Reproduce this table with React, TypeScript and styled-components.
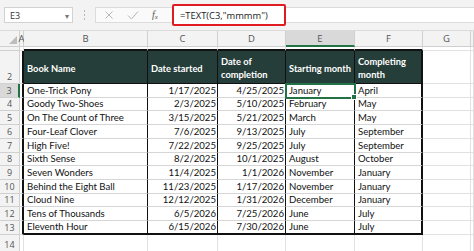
import React from 'react'
import styled, { createGlobalStyle, css } from 'styled-components'

const GlobalStyle = createGlobalStyle`
  html, body {
    margin: 0;
    padding: 0;
    background: #ffffff;
  }
  body {
    font-family: Lato, 'Noto Sans', sans-serif;
    overflow: hidden;
  }
`

const colors = {
  chrome: '#f3f3f3',
  grid: '#e1e1e1',
  headerLine: '#d0d0d0',
  headerText: '#555555',
  tableHead: '#263e3a',
  line: '#111111',
  rowLine: '#d6d6d6',
  excel: '#217346',
  red: '#e11b22',
}

const books = [
  ['One-Trick Pony', '1/17/2025', '4/25/2025', 'January', 'April'],
  ['Goody Two-Shoes', '2/3/2025', '5/10/2025', 'February', 'May'],
  ['On The Count of Three', '3/15/2025', '5/21/2025', 'March', 'May'],
  ['Four-Leaf Clover', '7/6/2025', '9/13/2025', 'July', 'September'],
  ['High Five!', '7/22/2025', '9/25/2025', 'July', 'September'],
  ['Sixth Sense', '8/2/2025', '10/1/2025', 'August', 'October'],
  ['Seven Wonders', '11/4/2025', '1/1/2026', 'November', 'January'],
  ['Behind the Eight Ball', '11/23/2025', '1/17/2026', 'November', 'January'],
  ['Cloud Nine', '12/12/2025', '1/31/2026', 'December', 'January'],
  ['Tens of Thousands', '6/5/2026', '7/25/2026', 'June', 'July'],
  ['Eleventh Hour', '6/15/2026', '7/30/2026', 'June', 'July'],
]

const columns = ['A', 'B', 'C', 'D', 'E', 'F', 'G', '']

const App = () => {
  return (
    <>
      <GlobalStyle />
      <Div_Window>
        <Div_FormulaBar>
          <Div_NameBox>
            E3
            <Span_Caret>▾</Span_Caret>
          </Div_NameBox>
          <Div_Grip>
            <i />
            <i />
            <i />
          </Div_Grip>
          <Div_FxGroup>
            <svg width='10' height='10' viewBox='0 0 10 10'>
              <path d='M1.5 1.5 L8.5 8.5 M8.5 1.5 L1.5 8.5' stroke='#b5b5b5' strokeWidth='1' fill='none' />
            </svg>
            <svg width='12' height='10' viewBox='0 0 12 10'>
              <path d='M1 5.5 L4.5 9 L11 1.5' stroke='#b5b5b5' strokeWidth='1' fill='none' />
            </svg>
            <Span_Fx>
              f<sub>x</sub>
            </Span_Fx>
          </Div_FxGroup>
          <Div_FormulaInput>=TEXT(C3,"mmmm")</Div_FormulaInput>
          <Div_FormulaRest />
        </Div_FormulaBar>

        <Div_Row $height='16px'>
          <Div_Corner>
            <svg width='8' height='8' viewBox='0 0 8 8'>
              <polygon points='8,0 8,8 0,8' fill='#bdbdbd' />
            </svg>
          </Div_Corner>
          {columns.map((c) => (
            <Div_ColHead key={c || 'rest'} $active={c === 'E'}>
              {c}
            </Div_ColHead>
          ))}
        </Div_Row>

        <Div_Row $height='4px'>
          <Div_RowHead>1</Div_RowHead>
          <Div_GridCell />
          {[0, 1, 2, 3, 4].map((i) => (
            <Div_GridCell key={i} $bottom={`2px solid ${colors.line}`} />
          ))}
          <Div_GridCell />
          <Div_GridCell />
        </Div_Row>

        <Div_Row $height='33px'>
          <Div_RowHead>2</Div_RowHead>
          <Div_GridCell $right={`2px solid ${colors.line}`} />
          <Div_HeadCell>Book Name</Div_HeadCell>
          <Div_HeadCell>Date started</Div_HeadCell>
          <Div_HeadCell>
            Date of
            <br />
            completion
          </Div_HeadCell>
          <Div_HeadCell>Starting month</Div_HeadCell>
          <Div_HeadCell $last>
            Completing
            <br />
            month
          </Div_HeadCell>
          <Div_GridCell />
          <Div_GridCell />
        </Div_Row>

        {books.map((b, i) => {
          const last = i === books.length - 1
          return (
            <Div_Row key={b[0]} $height='13.73px'>
              <Div_RowHead $active={i === 0}>{i + 3}</Div_RowHead>
              <Div_GridCell $right={`2px solid ${colors.line}`} />
              <Div_DataCell $last={last}>{b[0]}</Div_DataCell>
              <Div_DataCell $last={last} $num>
                {b[1]}
              </Div_DataCell>
              <Div_DataCell $last={last} $num>
                {b[2]}
              </Div_DataCell>
              <Div_DataCell $last={last} $selected={i === 0}>
                {b[3]}
              </Div_DataCell>
              <Div_DataCell $last={last} $edge>
                {b[4]}
              </Div_DataCell>
              <Div_GridCell />
              <Div_GridCell />
            </Div_Row>
          )
        })}

        <Div_Row $height='17px'>
          <Div_RowHead>14</Div_RowHead>
          {columns.map((c) => (
            <Div_GridCell key={c || 'rest'} />
          ))}
        </Div_Row>
      </Div_Window>
    </>
  )
}

export default App

const Div_Window = styled.div`
  width: 474px;
  height: 251px;
  overflow: hidden;
  background: #ffffff;
`

const Div_FormulaBar = styled.div`
  height: 31px;
  box-sizing: border-box;
  background: ${colors.chrome};
  border-bottom: 1px solid #dadada;
  display: flex;
  align-items: center;
  padding-left: 4px;
`

const Div_NameBox = styled.div`
  width: 69px;
  height: 16px;
  box-sizing: border-box;
  background: #ffffff;
  border: 1px solid #d2d2d2;
  display: flex;
  align-items: center;
  justify-content: space-between;
  padding: 0 3px 0 5px;
  font-family: 'Open Sans', sans-serif;
  font-size: 9px;
  color: #333333;
`

const Span_Caret = styled.span`
  font-size: 8px;
  color: #777777;
`

const Div_Grip = styled.div`
  width: 22px;
  display: flex;
  flex-direction: column;
  align-items: center;
  gap: 2px;
  & > i {
    width: 1px;
    height: 2px;
    background: #b9b9b9;
  }
`

const Div_FxGroup = styled.div`
  width: 77px;
  height: 16px;
  box-sizing: border-box;
  background: #fafafa;
  border: 1px solid #dcdcdc;
  border-right: none;
  display: flex;
  align-items: center;
  gap: 13px;
  padding-left: 8px;
`

const Span_Fx = styled.span`
  font-family: 'Liberation Serif', serif;
  font-style: italic;
  font-size: 10px;
  color: #555555;
  & > sub {
    font-size: 7px;
    vertical-align: -1px;
  }
`

const Div_FormulaInput = styled.div`
  width: 114px;
  height: 22px;
  box-sizing: border-box;
  border: 2px solid ${colors.red};
  border-radius: 2px;
  background: #ffffff;
  display: flex;
  align-items: center;
  padding-left: 6px;
  font-family: 'Open Sans', sans-serif;
  font-size: 9.4px;
  color: #222222;
  white-space: nowrap;
`

const Div_FormulaRest = styled.div`
  flex: 1;
  height: 16px;
  box-sizing: border-box;
  background: #ffffff;
  border-top: 1px solid #dcdcdc;
  border-bottom: 1px solid #dcdcdc;
`

const Div_Row = styled.div<{ $height: string }>`
  display: grid;
  grid-template-columns: 20px 4px 124px 70px 68px 69px 68px 48px 1fr;
  height: ${(p) => p.$height};
`

const cellBase = css`
  box-sizing: border-box;
  min-width: 0;
  display: flex;
  white-space: nowrap;
`

const Div_Corner = styled.div`
  ${cellBase};
  background: ${colors.chrome};
  border-right: 1px solid ${colors.headerLine};
  border-bottom: 1px solid ${colors.headerLine};
  align-items: flex-end;
  justify-content: flex-end;
  padding: 0 2px 2px 0;
`

const Div_ColHead = styled.div<{ $active?: boolean }>`
  ${cellBase};
  justify-content: center;
  align-items: center;
  overflow: visible;
  background: ${(p) => (p.$active ? '#d9d9d9' : colors.chrome)};
  border-right: 1px solid ${colors.headerLine};
  border-bottom: ${(p) => (p.$active ? `2px solid ${colors.excel}` : `1px solid ${colors.headerLine}`)};
  font-family: 'Open Sans', sans-serif;
  font-size: 9.5px;
  color: ${colors.headerText};
`

const Div_RowHead = styled.div<{ $active?: boolean }>`
  ${cellBase};
  overflow: hidden;
  justify-content: center;
  align-items: flex-end;
  background: ${(p) => (p.$active ? '#d9d9d9' : colors.chrome)};
  border-right: ${(p) => (p.$active ? `2px solid ${colors.excel}` : `1px solid ${colors.headerLine}`)};
  border-bottom: 1px solid ${colors.headerLine};
  font-family: 'Open Sans', sans-serif;
  font-size: 9px;
  line-height: 12px;
  color: ${colors.headerText};
`

const Div_GridCell = styled.div<{ $right?: string; $bottom?: string }>`
  ${cellBase};
  border-right: ${(p) => p.$right ?? `1px solid ${colors.grid}`};
  border-bottom: ${(p) => p.$bottom ?? `1px solid ${colors.grid}`};
`

const Div_HeadCell = styled.div<{ $last?: boolean }>`
  ${cellBase};
  align-items: center;
  padding: 2px 0 0 3px;
  background: ${colors.tableHead};
  border-right: ${(p) => (p.$last ? '2px' : '1px')} solid ${colors.line};
  border-bottom: 1px solid ${colors.line};
  color: #ffffff;
  font-weight: 700;
  font-size: 9.3px;
  line-height: 13px;
`

const Div_DataCell = styled.div<{ $num?: boolean; $last?: boolean; $edge?: boolean; $selected?: boolean }>`
  ${cellBase};
  position: relative;
  align-items: flex-end;
  justify-content: ${(p) => (p.$num ? 'flex-end' : 'flex-start')};
  padding: ${(p) => (p.$num ? '0 1px 0 0' : '0 0 0 3px')};
  border-right: ${(p) => (p.$edge ? '2px' : '1px')} solid ${colors.line};
  border-bottom: ${(p) => (p.$last ? `2px solid ${colors.line}` : `1px solid ${colors.rowLine}`)};
  font-size: 9.6px;
  line-height: 12px;
  color: #111111;
  ${(p) =>
    p.$selected &&
    css`
      outline: 2px solid ${colors.excel};
      outline-offset: -1px;
      z-index: 1;
      &::after {
        content: '';
        position: absolute;
        right: -3px;
        bottom: -3px;
        width: 4px;
        height: 4px;
        background: ${colors.excel};
        border: 1px solid #ffffff;
      }
    `}
`
